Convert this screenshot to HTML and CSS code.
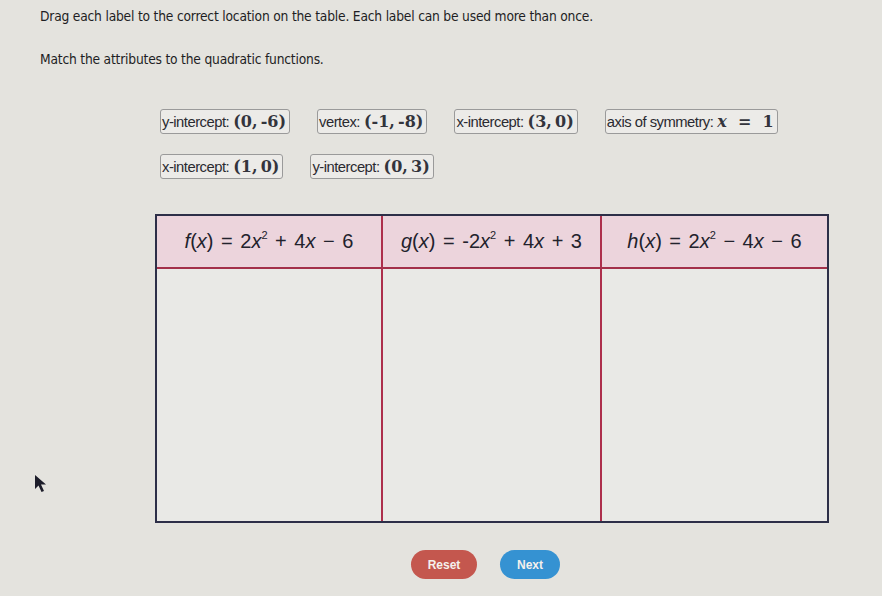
FILE: index.html
```html
<!DOCTYPE html>
<html lang="en">
<head>
    <meta charset="UTF-8">
    <title>Match the attributes</title>
    <link rel="stylesheet" href="styles.css">
</head>
<body>
    <div class="page">
        <p class="directions">Drag each label to the correct location on the table. Each label can be used more than once.</p>
        <p class="prompt">Match the attributes to the quadratic functions.</p>

        <div class="tiles">
            <div class="tile-row">
                <div class="tile">y-intercept: <span class="math">(0,&thinsp;-6)</span></div>
                <div class="tile">vertex: <span class="math">(-1,&thinsp;-8)</span></div>
                <div class="tile">x-intercept: <span class="math">(3,&thinsp;0)</span></div>
                <div class="tile">axis of symmetry: <span class="math"><i>x</i> &nbsp;= &nbsp;1</span></div>
            </div>
            <div class="tile-row">
                <div class="tile">x-intercept: <span class="math">(1,&thinsp;0)</span></div>
                <div class="tile">y-intercept: <span class="math">(0,&thinsp;3)</span></div>
            </div>
        </div>

        <div class="table">
            <div class="cell head"><span><i>f</i>(<i>x</i>) = 2<i>x</i><sup>2</sup> + 4<i>x</i> − 6</span></div>
            <div class="cell head"><span><i>g</i>(<i>x</i>) = -2<i>x</i><sup>2</sup> + 4<i>x</i> + 3</span></div>
            <div class="cell head"><span><i>h</i>(<i>x</i>) = 2<i>x</i><sup>2</sup> − 4<i>x</i> − 6</span></div>
            <div class="cell drop"></div>
            <div class="cell drop"></div>
            <div class="cell drop"></div>
        </div>

        <div class="actions">
            <button class="btn btn-reset">Reset</button>
            <button class="btn btn-next">Next</button>
        </div>

        <svg class="cursor" width="16" height="20" viewBox="0 0 16 20">
            <path d="M1 1 L1 15 L4.5 11.5 L7.5 18 L10 17 L7 10.5 L12 10.5 Z" fill="#1d1d2a"/>
        </svg>
    </div>
</body>
</html>
```

FILE: styles.css
```css
* {
    margin: 0;
    padding: 0;
    box-sizing: border-box;
}

body {
    background: #e4e3de;
    font-family: 'DejaVu Sans Condensed', 'Liberation Sans', sans-serif;
    color: #1e1e24;
    width: 882px;
    height: 596px;
    overflow: hidden;
}

.page {
    position: relative;
    padding: 8px 0 0 40px;
    height: 100%;
}

.directions {
    font-size: 13.7px;
    letter-spacing: -0.2px;
}

.prompt {
    font-size: 13.7px;
    letter-spacing: -0.2px;
    margin-top: 27px;
}

.tiles {
    margin: 42px 0 0 120px;
    display: flex;
    flex-direction: column;
    gap: 20px;
}

.tile-row {
    display: flex;
    gap: 27px;
}

.tile {
    display: flex;
    align-items: center;
    gap: 4px;
    height: 25px;
    padding: 0 3px 0 1px;
    background: #ecebe8;
    border: 1px solid #9a9a9a;
    border-radius: 3px;
    font-family: 'Liberation Sans', sans-serif;
    font-size: 14.8px;
    letter-spacing: -0.5px;
    color: #2a2a30;
}

.math {
    font-family: 'DejaVu Serif', 'Liberation Serif', serif;
    font-size: 16px;
    font-weight: bold;
    letter-spacing: 0;
    color: #33343c;
}

.math i {
    font-style: italic;
}

.table {
    display: grid;
    grid-template-columns: 226px 219px 225px;
    grid-template-rows: 53px 252px;
    width: 674px;
    margin: 35px 0 0 115px;
    border: 2px solid #2d2f48;
    background: #e9e9e6;
}

.cell {
    border-right: 2px solid #ad2f4c;
}

.cell:nth-child(3n) {
    border-right: none;
}

.head {
    display: flex;
    align-items: center;
    justify-content: center;
    background: #ecd4dc;
    border-bottom: 2px solid #a3304a;
    font-family: 'Liberation Sans', sans-serif;
    font-size: 20px;
    word-spacing: 2px;
    color: #22222c;
    white-space: nowrap;
}

.head sup {
    font-size: 11px;
    vertical-align: 9px;
    line-height: 0;
}

.actions {
    display: flex;
    gap: 23px;
    margin: 27px 0 0 371px;
}

.btn {
    border: none;
    height: 29px;
    border-radius: 15px;
    font-family: 'Liberation Sans', sans-serif;
    font-size: 12px;
    font-weight: bold;
    color: #f4f0ec;
}

.btn-reset {
    width: 66px;
    background: #c4574e;
}

.btn-next {
    width: 60px;
    background: #3592d2;
}

.cursor {
    position: absolute;
    left: 34px;
    top: 474px;
}
```
